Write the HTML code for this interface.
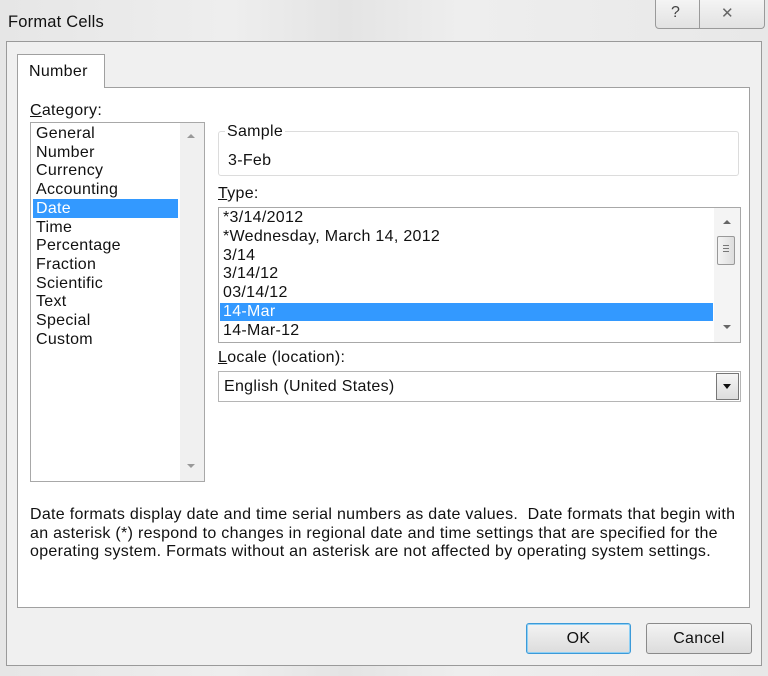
<!DOCTYPE html>
<html><head><style>
*{margin:0;padding:0;box-sizing:border-box}
body{width:768px;height:676px;background:#fff;font-family:"Liberation Sans",sans-serif;font-size:16px;letter-spacing:0.3px;color:#111;position:relative;overflow:hidden}
.a{position:absolute}
.t{white-space:nowrap}
u{text-decoration:underline}
</style></head><body>
<div class="a" style="left:0;top:0;width:768px;height:676px;background:linear-gradient(90deg,#e6e6e6,#eee 30%,#e4e4e4 45%,#eee 60%,#e8e8e8)"></div>
<div class="a t" style="left:8px;top:13px;font-size:16.5px;letter-spacing:0.2px">Format Cells</div>
<div class="a" style="left:655px;top:0;width:110px;height:29px;border:1px solid #9a9a9a;border-top:none;border-radius:0 0 4px 4px;background:linear-gradient(#f4f4f4,#e2e2e2)"></div>
<div class="a" style="left:699px;top:0;width:1px;height:29px;background:#9a9a9a"></div>
<div class="a t" style="left:671px;top:4px;font-size:16px;color:#444">?</div>
<div class="a t" style="left:721px;top:4px;font-size:15px;color:#666">✕</div>
<div class="a" style="left:6px;top:41px;width:756px;height:625px;border:1px solid #9a9a9a;background:#f0f0f0"></div>
<div class="a" style="left:17px;top:87px;width:733px;height:521px;border:1px solid #a0a0a0;background:#fff"></div>
<div class="a" style="left:17px;top:54px;width:88px;height:34px;border:1px solid #a0a0a0;border-bottom:none;background:#fff"></div>
<div class="a t" style="left:29px;top:63px">Number</div>
<div class="a t" style="left:30px;top:102px"><u>C</u>ategory:</div>
<div class="a" style="left:30px;top:122px;width:175px;height:360px;border:1px solid #a8a8a8;background:#fff"></div>
<div class="a" style="left:180px;top:123px;width:24px;height:358px;background:#f0f0f0"></div>
<div class="a" style="left:187px;top:134px;width:0;height:0;border:4px solid transparent;border-bottom:4px solid #999;border-top:none"></div>
<div class="a" style="left:187px;top:464px;width:0;height:0;border:4px solid transparent;border-top:4px solid #999;border-bottom:none"></div>
<div class="a" style="left:33px;top:199px;width:145px;height:19px;background:#3399ff"></div>
<div class="a t" style="left:36px;top:125px;line-height:18.7px">General<br>Number<br>Currency<br>Accounting<br><span style="color:#fff">Date</span><br>Time<br>Percentage<br>Fraction<br>Scientific<br>Text<br>Special<br>Custom</div>
<div class="a" style="left:218px;top:131px;width:521px;height:45px;border:1px solid #dcdcdc;border-radius:3px"></div>
<div class="a t" style="left:225px;top:123px;background:#fff;padding:0 2px">Sample</div>
<div class="a t" style="left:228px;top:152px">3-Feb</div>
<div class="a t" style="left:218px;top:185px"><u>T</u>ype:</div>
<div class="a" style="left:218px;top:207px;width:523px;height:136px;border:1px solid #a8a8a8;background:#fff"></div>
<div class="a" style="left:714px;top:208px;width:26px;height:134px;background:#f4f4f4"></div>
<div class="a" style="left:723px;top:220px;border:4px solid transparent;border-bottom:4px solid #666;border-top:none"></div>
<div class="a" style="left:723px;top:325px;border:4px solid transparent;border-top:4px solid #666;border-bottom:none"></div>
<div class="a" style="left:717px;top:236px;width:18px;height:29px;border:1px solid #999;border-radius:2px;background:linear-gradient(90deg,#f4f4f4,#ddd)"></div>
<div class="a" style="left:723px;top:245px;width:6px;height:7px;border-top:1px solid #777;border-bottom:1px solid #777"></div>
<div class="a" style="left:723px;top:248px;width:6px;height:1px;background:#777"></div>
<div class="a" style="left:220px;top:303px;width:493px;height:18px;background:#3399ff"></div>
<div class="a t" style="left:223px;top:209px;line-height:18.8px">*3/14/2012<br>*Wednesday, March 14, 2012<br>3/14<br>3/14/12<br>03/14/12<br><span style="color:#fff">14-Mar</span><br>14-Mar-12</div>
<div class="a t" style="left:218px;top:349px"><u>L</u>ocale (location):</div>
<div class="a" style="left:218px;top:371px;width:523px;height:31px;border:1px solid #b5b5b5;background:#fff"></div>
<div class="a t" style="left:224px;top:378px">English (United States)</div>
<div class="a" style="left:716px;top:373px;width:23px;height:27px;border:1px solid #777;background:linear-gradient(#f6f6f6,#ddd)"></div>
<div class="a" style="left:723px;top:384px;border:4.5px solid transparent;border-top:5px solid #111;border-bottom:none"></div>
<div class="a t" style="left:30px;top:506px;line-height:18.5px">Date formats display date and time serial numbers as date values.&nbsp; Date formats that begin with<br>an asterisk (*) respond to changes in regional date and time settings that are specified for the<br>operating system. Formats without an asterisk are not affected by operating system settings.</div>
<div class="a" style="left:526px;top:623px;width:105px;height:31px;border:1px solid #3c9ad8;border-radius:3px;background:linear-gradient(#f3f3f3,#dcdcdc);box-shadow:inset 0 0 0 1px #8fd0f5;text-align:center;line-height:29px">OK</div>
<div class="a" style="left:646px;top:623px;width:106px;height:31px;border:1px solid #8a8a8a;border-radius:3px;background:linear-gradient(#f3f3f3,#dcdcdc);text-align:center;line-height:29px">Cancel</div>
</body></html>
